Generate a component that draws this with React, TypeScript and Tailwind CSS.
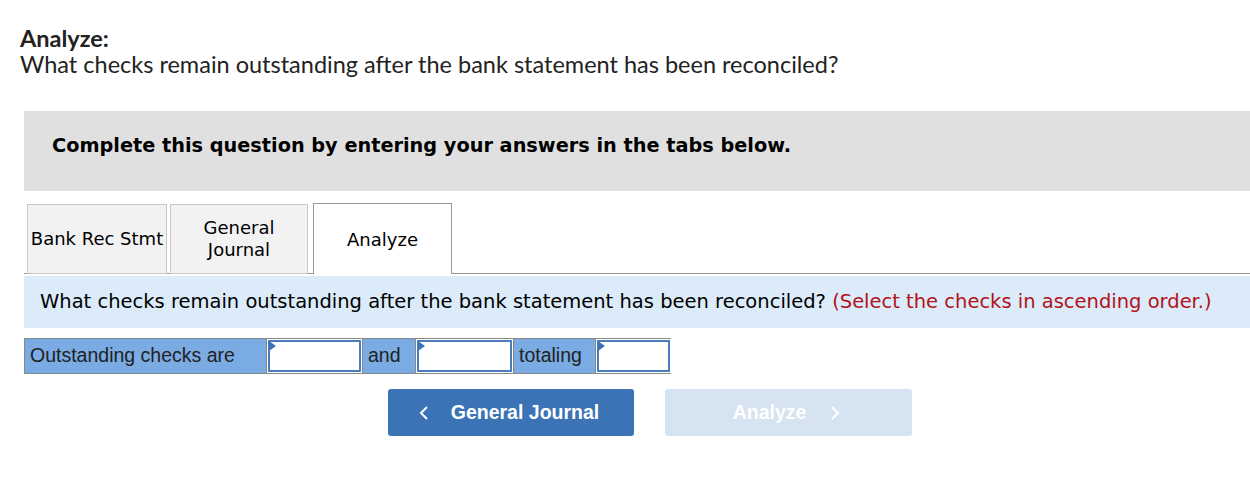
import React from 'react'

const verdana = { fontFamily: '"DejaVu Sans", Verdana, sans-serif' }

function Marker() {
  return <span className="absolute left-[2px] top-[2px] w-0 h-0 border-t-[5px] border-b-[5px] border-l-[7px] border-t-transparent border-b-transparent border-l-[#3b73b6]" />
}

function Blank({ w }: { w: string }) {
  return (
    <div className={`relative h-full border-l border-[#888] p-[1px] ${w}`}>
      <div className="h-full border-2 border-[#4a7ebb] bg-white" />
      <Marker />
    </div>
  )
}

function Label({ children, w }: { children: React.ReactNode; w: string }) {
  return <div className={`h-full flex items-center border-l border-[#888] bg-[#7aabe3] px-[5px] text-[19.5px] text-[#222] ${w}`}>{children}</div>
}

export default function App() {
  return (
    <div className="bg-white w-[1250px] h-[496px] overflow-hidden">
      <div className="pl-[20px] pt-[25px] text-[#222] font-['Lato','Open_Sans',sans-serif] text-[23.5px] leading-[26px]">
        <div className="font-bold">Analyze:</div>
        <div>What checks remain outstanding after the bank statement has been reconciled?</div>
      </div>

      <div className="ml-[24px] mt-[34px] h-[80px] bg-[#e0e0e0] flex items-center pl-[28px] pb-[10px] text-[19.3px] font-bold text-black" style={verdana}>
        Complete this question by entering your answers in the tabs below.
      </div>

      <div className="ml-[24px] mt-[12px] flex items-end border-b border-[#999] h-[71px] text-[18px] text-black" style={verdana}>
        <div className="ml-[3px] w-[140px] h-[70px] -mb-px border border-[#c8c8c8] bg-[#f2f2f2] flex items-center justify-center leading-[22px] whitespace-nowrap">Bank Rec Stmt</div>
        <div className="ml-[3px] w-[138px] h-[70px] -mb-px border border-[#c8c8c8] bg-[#f2f2f2] flex items-center justify-center text-center leading-[22px]">General<br />Journal</div>
        <div className="ml-[5px] w-[139px] h-[71px] -mb-px border border-b-0 border-[#999] bg-white flex items-center justify-center">Analyze</div>
      </div>

      <div className="ml-[24px] mt-[2px] h-[52px] bg-[#dbebf9] flex items-center pl-[16px] text-[19.5px] text-black whitespace-nowrap" style={verdana}>
        What checks remain outstanding after the bank statement has been reconciled?&nbsp;<span className="text-[#b3121a]">(Select the checks in ascending order.)</span>
      </div>

      <div className="ml-[24px] mt-[10px] w-[647px] h-[36px] flex border-t border-b border-[#888] font-['Liberation_Sans',Arial,sans-serif]">
        <Label w="w-[242px]">Outstanding checks are</Label>
        <Blank w="w-[96px]" />
        <Label w="w-[53px]">and</Label>
        <Blank w="w-[98px]" />
        <Label w="w-[82px]">totaling</Label>
        <Blank w="w-[76px]" />
      </div>

      <div className="mt-[15px] ml-[388px] flex gap-[31px] font-['Liberation_Sans',Arial,sans-serif] text-[19.5px] font-bold">
        <button className="w-[246px] h-[47px] rounded-[3px] bg-[#3b73b6] text-white flex items-center justify-center gap-[22px] pr-[4px]">
          <svg width="10" height="16" viewBox="0 0 10 16" fill="none" stroke="white" strokeWidth="2"><path d="M8 2 L2 8 L8 14" /></svg>
          General Journal
        </button>
        <button className="w-[247px] h-[47px] rounded-[3px] bg-[#d6e3f1] text-white flex items-center justify-center gap-[24px] pr-[4px]">
          Analyze
          <svg width="10" height="16" viewBox="0 0 10 16" fill="none" stroke="white" strokeWidth="2"><path d="M2 2 L8 8 L2 14" /></svg>
        </button>
      </div>
    </div>
  )
}
